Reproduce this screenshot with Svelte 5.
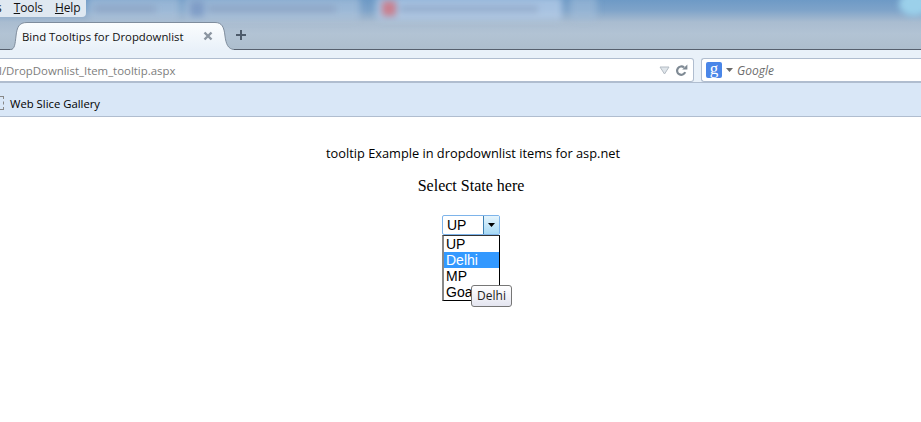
<script lang="ts">
  const items = ['UP', 'Delhi', 'MP', 'Goa'];
  let hovered = 1;
</script>

<div class="browser">
  <header class="tabstrip">
    <!-- background tabs are behind aero glass, so they're blurred -->
    <div class="glass">
      <div class="blurred">
        <div class="bgtab zero"><span class="smear"></span></div>
        <div class="bgtab first"><span class="fav blue"></span><span class="smear"></span></div>
        <div class="bgtab second"><span class="fav red"></span><span class="smear"></span></div>
        <div class="bgtab third"></div>
        <div class="glow"></div>
      </div>
    </div>

    <div class="menubar">
      <span class="cut">s</span>
      <span><u>T</u>ools</span>
      <span><u>H</u>elp</span>
    </div>

    <div class="tab">
      <svg class="tab-shape" width="224" height="28" viewBox="0 0 224 28">
        <defs>
          <linearGradient id="tabfill" x1="0" y1="0" x2="0" y2="1">
            <stop offset="0" stop-color="#fbfdfe" />
            <stop offset="1" stop-color="#e9f1f9" />
          </linearGradient>
        </defs>
        <path
          d="M0 28C5 28 5 22 6 14C7 5 9 .5 17 .5H205C212 .5 214 5 215 14C216 22 218 27 224 27.5V28Z"
          fill="url(#tabfill)"
        />
        <path
          d="M0 27.5C5 27.5 5 22 6 14C7 5 9 .5 17 .5H205C212 .5 214 5 215 14C216 22 218 27 224 27.5"
          fill="none"
          stroke="#7f8d9d"
        />
      </svg>
      <span class="tab-title">Bind Tooltips for Dropdownlist</span>
      <svg class="close" width="10" height="10" viewBox="0 0 10 10">
        <path d="M1.5 1.5l7 7M8.5 1.5l-7 7" stroke="#8b95a1" stroke-width="2.4" />
      </svg>
    </div>
    <svg class="plus" width="12" height="12" viewBox="0 0 12 12">
      <path d="M6 1v10M1 6h10" stroke="#4d5b6b" stroke-width="2" />
    </svg>
  </header>

  <div class="navbar">
    <div class="urlbar">
      <span class="url">l/DropDownlist_Item_tooltip.aspx</span>
      <svg width="11" height="9" viewBox="0 0 11 9"><path d="M1 1h9L5.5 8z" fill="#dfe5ea" stroke="#b4bcc4" /></svg>
      <svg class="reload" width="13" height="13" viewBox="0 0 13 13">
        <path d="M10.2 8.2A4.2 4.2 0 1 1 9 3.4" fill="none" stroke="#7f8a94" stroke-width="2.2" />
        <path d="M7.2 5.4L12.4 5.4 12.4 .6z" fill="#7f8a94" />
      </svg>
    </div>
    <div class="searchbar">
      <span class="glogo">g</span>
      <svg width="7" height="4" viewBox="0 0 7 4"><path d="M0 0h7L3.5 4z" fill="#6b6b6b" /></svg>
      <span class="engine">Google</span>
    </div>
  </div>

  <div class="bookmarks">
    <span class="slice"></span>
    <span>Web Slice Gallery</span>
  </div>

  <main class="page">
    <p class="heading">tooltip Example in dropdownlist items for asp.net</p>
    <p class="label">Select State here</p>

    <div class="dropdown">
      <div class="select">
        <span class="value">UP</span>
        <span class="arrow">
          <svg width="7" height="4" viewBox="0 0 7 4"><path d="M0 0h7L3.5 4z" fill="#000" /></svg>
        </span>
      </div>
      <ul class="list">
        {#each items as item, i}
          <li class:active={i === hovered}>{item}</li>
        {/each}
      </ul>
      <div class="tooltip">Delhi</div>
    </div>
  </main>
</div>

<style>
  :global(body) {
    margin: 0;
    background: #fff;
    overflow: hidden;
  }

  .browser {
    width: 921px;
    height: 422px;
    display: flex;
    flex-direction: column;
    font-family: "Open Sans", "Noto Sans", sans-serif;
    overflow: hidden;
  }

  .tabstrip {
    position: relative;
    height: 50px;
    flex: none;
    box-sizing: border-box;
    border-bottom: 1px solid #56606e;
    display: flex;
    align-items: flex-end;
    padding-left: 10px;
    background: linear-gradient(#6e9ac6 0, #7ea3c9 10px, #a9bcd0 22px, #b2c3d4 34px, #adbecd 49px);
  }

  .glass {
    position: absolute;
    inset: 0;
    overflow: hidden;
  }

  .blurred {
    position: absolute;
    inset: 0;
    filter: blur(3px);
  }

  .bgtab {
    position: absolute;
    top: -3px;
    height: 23px;
    background: rgba(185, 205, 228, 0.5);
    border-radius: 4px;
    display: flex;
    align-items: center;
    gap: 4px;
    padding-left: 6px;
    box-sizing: border-box;
  }

  .zero { left: 88px; width: 92px; }
  .first { left: 184px; width: 176px; }
  .second { left: 376px; width: 186px; background: rgba(190, 212, 238, 0.65); }
  .third { left: 570px; width: 27px; background: rgba(170, 195, 222, 0.5); }

  .fav {
    width: 14px;
    height: 15px;
    flex: none;
    border-radius: 2px;
  }

  .blue { background: #7f9cc6; }
  .red { background: #c9808f; }

  .smear {
    height: 6px;
    flex: 1;
    margin-right: 24px;
    background: rgba(125, 140, 175, 0.42);
  }

  .glow {
    position: absolute;
    right: -8px;
    top: -8px;
    width: 30px;
    height: 24px;
    background: #9bd0ea;
    border-radius: 50%;
  }

  .menubar {
    position: absolute;
    left: 0;
    top: 0;
    width: 86px;
    height: 17px;
    box-sizing: border-box;
    padding-bottom: 2px;
    display: flex;
    align-items: center;
    gap: 12px;
    background: #dfe8f1;
    border-bottom-right-radius: 4px;
    font-size: 12px;
    letter-spacing: -0.1px;
    color: #111;
  }

  .cut {
    margin-left: -4px;
  }

  .tab {
    position: relative;
    width: 224px;
    height: 28px;
    margin-bottom: -1px;
    flex: none;
    box-sizing: border-box;
    display: flex;
    align-items: center;
    justify-content: space-between;
    padding: 0 21px 0 12px;
    font-size: 11.35px;
    color: #111;
  }

  .tab-shape {
    position: absolute;
    left: 0;
    top: 0;
  }

  .tab-title, .close {
    position: relative;
  }

  .plus {
    margin: 0 0 8px 1px;
    position: relative;
  }

  .navbar {
    height: 32px;
    flex: none;
    box-sizing: border-box;
    padding: 8px 0 0 0;
    display: flex;
    gap: 7px;
    background: #e9f1f9;
  }

  .urlbar, .searchbar {
    height: 24px;
    box-sizing: border-box;
    background: #fff;
    border: 1px solid #b0bdcf;
    display: flex;
    align-items: center;
  }

  .urlbar {
    width: 695px;
    margin-left: -1px;
    border-left: none;
    border-radius: 0 3px 3px 0;
    padding-right: 5px;
    gap: 5px;
  }

  .url {
    flex: 1;
    font-size: 11.4px;
    color: #7d7d7d;
    white-space: nowrap;
  }

  .searchbar {
    flex: 1;
    border-right: none;
    border-radius: 3px 0 0 3px;
    padding-left: 4px;
    gap: 4px;
  }

  .glogo {
    width: 16px;
    height: 16px;
    background: #4a86e8;
    border-radius: 2px;
    color: #fff;
    font: 17px/13px "Liberation Serif", serif;
    text-align: center;
  }

  .engine {
    font-size: 12px;
    font-style: italic;
    color: #6d6d6d;
  }

  .bookmarks {
    height: 35px;
    flex: none;
    box-sizing: border-box;
    padding-top: 7px;
    border-top: 1px solid #b0bdcf;
    border-bottom: 1px solid #b0bdcf;
    background: #d9e7f7;
    display: flex;
    align-items: center;
    gap: 6px;
    font-size: 11.3px;
    color: #000;
  }

  .slice {
    width: 3px;
    height: 12px;
    border: 1px dashed #888;
    border-left: none;
    flex: none;
  }

  /* the page is wider than the window: its centre sits right of the window's */
  .page {
    flex: 1;
    box-sizing: content-box;
    width: 942px;
    flex-shrink: 0;
    display: flex;
    flex-direction: column;
    align-items: center;
    background: #fff;
  }

  .page p {
    margin: 0;
    color: #000;
  }

  .heading {
    padding: 27px 0 0 4px;
    font-size: 12.8px;
    line-height: 18px;
  }

  .label {
    padding-top: 15px;
    font: 16px/18px "Liberation Serif", serif;
  }

  .dropdown {
    position: relative;
    width: 58px;
    margin-top: 20px;
    font: 14px/16px "Liberation Sans", sans-serif;
    color: #000;
  }

  .select {
    height: 20px;
    box-sizing: border-box;
    display: flex;
    justify-content: space-between;
    border: 1px solid #7eb4ea;
    border-radius: 2px;
  }

  .value {
    padding-left: 4px;
    line-height: 19px;
  }

  .arrow {
    width: 15px;
    display: flex;
    align-items: center;
    justify-content: center;
    border-left: 1px solid #3c7fb1;
    background: linear-gradient(#e5f4fc, #a7d9f5);
  }

  .list {
    list-style: none;
    margin: 0;
    padding: 0;
    box-sizing: border-box;
    height: 66px;
    border: 1px solid #000;
    border-left: 2px solid #888;
    border-top-color: #333;
  }

  .list li {
    height: 16px;
    padding-left: 2px;
  }

  .list li.active {
    background: #3399ff;
    color: #fff;
  }

  .tooltip {
    position: absolute;
    left: 29px;
    top: 70px;
    width: 41px;
    height: 22px;
    box-sizing: border-box;
    border: 1px solid #767676;
    border-radius: 3px;
    background: linear-gradient(#fff, #e4e5f0);
    font: 12px/20px "Open Sans", sans-serif;
    text-align: center;
    color: #222;
  }
</style>
